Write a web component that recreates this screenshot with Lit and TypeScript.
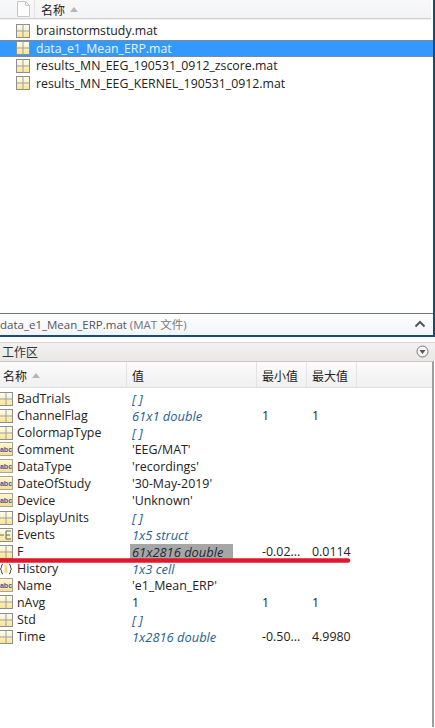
import { LitElement, html, css, svg } from "lit";
import { customElement } from "lit/decorators.js";

type Kind = "grid" | "abc" | "struct" | "cell";
interface Row { name: string; kind: Kind; value: string; blue?: boolean; min?: string; max?: string; hl?: boolean; }

const rows: Row[] = [
  { name: "BadTrials", kind: "grid", value: "[ ]", blue: true },
  { name: "ChannelFlag", kind: "grid", value: "61x1 double", blue: true, min: "1", max: "1" },
  { name: "ColormapType", kind: "grid", value: "[ ]", blue: true },
  { name: "Comment", kind: "abc", value: "'EEG/MAT'" },
  { name: "DataType", kind: "abc", value: "'recordings'" },
  { name: "DateOfStudy", kind: "abc", value: "'30-May-2019'" },
  { name: "Device", kind: "abc", value: "'Unknown'" },
  { name: "DisplayUnits", kind: "grid", value: "[ ]", blue: true },
  { name: "Events", kind: "struct", value: "1x5 struct", blue: true },
  { name: "F", kind: "grid", value: "61x2816 double", blue: true, min: "-0.02...", max: "0.0114", hl: true },
  { name: "History", kind: "cell", value: "1x3 cell", blue: true },
  { name: "Name", kind: "abc", value: "'e1_Mean_ERP'" },
  { name: "nAvg", kind: "grid", value: "1", min: "1", max: "1" },
  { name: "Std", kind: "grid", value: "[ ]", blue: true },
  { name: "Time", kind: "grid", value: "1x2816 double", blue: true, min: "-0.50...", max: "4.9980" },
];

const files = ["brainstormstudy.mat", "data_e1_Mean_ERP.mat", "results_MN_EEG_190531_0912_zscore.mat", "results_MN_EEG_KERNEL_190531_0912.mat"];

const gridIcon = (id: string) => html`<svg width="14" height="14" viewBox="0 0 14 14">
  <defs><linearGradient id=${id} x1="0" y1="0" x2="0" y2="1"><stop offset="0" stop-color="#fffdf0"/><stop offset="1" stop-color="#fbe38e"/></linearGradient></defs>
  <rect x=".5" y=".5" width="13" height="13" fill="url(#${id})" stroke="#8b8f93"/>
  <path d="M7 .5V13.5M.5 7H13.5" stroke="#9aa0a4" fill="none"/>
</svg>`;

const abcIcon = (id: string) => html`<svg width="14" height="14" viewBox="0 0 14 14">
  <defs><linearGradient id=${id} x1="0" y1="0" x2="0" y2="1"><stop offset="0" stop-color="#fff8d8"/><stop offset="1" stop-color="#f5dc90"/></linearGradient></defs>
  <rect x=".5" y=".5" width="13" height="13" fill="url(#${id})" stroke="#a8a592"/>
  ${svg`<text x="7" y="10" text-anchor="middle" font-family="Liberation Sans" font-size="7" font-weight="700" fill="#2f5f9e">abc</text>`}
</svg>`;

const structIcon = (id: string) => html`<svg width="14" height="14" viewBox="0 0 14 14">
  <defs><linearGradient id=${id} x1="0" y1="0" x2="0" y2="1"><stop offset="0" stop-color="#fffdf0"/><stop offset="1" stop-color="#fbe38e"/></linearGradient></defs>
  <rect x=".5" y=".5" width="13" height="13" fill="url(#${id})" stroke="#8b8f93"/>
  <path d="M.5 7H5M12 3H7V11H12M7 7H11" stroke="#55705a" stroke-width="1" fill="none"/>
</svg>`;

const cellIcon = () => html`<svg width="14" height="14" viewBox="0 0 14 14">
  <path d="M4 2C2 2 3 6 1.500 7C3 8 2 12 4 12M10 2C12 2 11 6 12.500 7C11 8 12 12 10 12" stroke="#3c3c3c" fill="none"/>
  <rect x="5.500" y="3" width="3" height="8" fill="#f5dc80"/>
</svg>`;

@customElement("app-root")
export class AppRoot extends LitElement {
  static styles = css`
    :host { display: block; position: relative; width: 435px; height: 728px; overflow: hidden; background: #fff; color: #222; font-family: "Open Sans", "Noto Sans CJK SC", sans-serif; font-size: 12.400px; }
    .files { height: 337px; box-sizing: border-box; border-right: 2px solid #1c4a78; border-bottom: 2px solid #1c4a78; display: flex; flex-direction: column; }
    .fhead { height: 18px; flex: none; display: flex; align-items: center; background: linear-gradient(#f8f8f9, #f2f3f4); border-bottom: 1px solid #d2d2d2; box-shadow: 0 1px 0 #efefef; margin-right: 2px; }
    .docslot { width: 35px; height: 18px; box-sizing: border-box; border-right: 1px solid #e2e2e2; display: flex; align-items: center; justify-content: center; padding-left: 13px; }
    .hname { padding-left: 6px; display: flex; align-items: center; gap: 5px; font-family: "Noto Sans CJK SC", sans-serif; font-size: 12px; }
    .sort { width: 0; height: 0; border-left: 4px solid transparent; border-right: 4px solid transparent; border-bottom: 5px solid #b3b6ba; }
    .flist { flex: 1; padding-top: 3px; font-size: 12.300px; }
    .frow { height: 17.500px; display: flex; align-items: center; gap: 6px; padding-left: 16px; box-sizing: border-box; white-space: nowrap; }
    .frow.sel { background: #3399ff; color: #e8f3ff; border-top: 1px solid #7d8a99; border-bottom: 1px solid #7d8a99; }
    .fstatus { height: 22px; flex: none; box-sizing: border-box; border-top: 1px solid #6b7480; background: linear-gradient(#fff, #f1f4f8); display: flex; align-items: center; justify-content: space-between; padding: 0 7px 1px 0; white-space: nowrap; font-size: 11.500px; color: #777; }
    .fstatus b { font-weight: 400; color: #555; }
    .work { margin-top: 5px; }
    .wtitle { height: 19px; box-sizing: border-box; background: linear-gradient(#f2f1ef, #e9e8e5); border-top: 1px solid #d8d5d0; display: flex; align-items: center; justify-content: space-between; padding: 0 6px 2px 2px; font-family: "Noto Sans CJK SC", sans-serif; font-size: 12px; color: #333; }
    .wtable { border-right: 2px solid #9d9d9d; border-top: 1px solid #c9c9c9; height: 366px; box-sizing: border-box; margin-right: 1px; }
    .thead, .trow { display: grid; grid-template-columns: 127px 130px 50px 50px 1fr; }
    .thead { height: 25px; background: linear-gradient(#fbfbfb, #f0f0f0); border-bottom: 1px solid #dedede; font-family: "Noto Sans CJK SC", sans-serif; font-size: 12px; margin-bottom: 1.500px; }
    .thead > div { display: flex; align-items: center; gap: 5px; padding: 1px 0 0 5px; border-right: 1px solid #e3e3e3; box-sizing: border-box; }
    .thead > div:first-child { padding-left: 3px; }
    .thead > div:last-child { border-right: 0; }
    .trow { height: 17px; align-items: center; white-space: nowrap; }
    .cname { display: flex; align-items: center; gap: 4px; overflow: hidden; }
    .cname svg { margin-left: -1px; flex: none; }
    .cval { padding-left: 5px; }
    .blue { color: #1f5f96; font-style: italic; font-size: 12.900px; }
    .cval span { display: inline-block; line-height: 16px; }
    .hl { background: #a6a6a6; color: #1e2a35; width: 103px; margin-left: -2px; padding-left: 2px; box-sizing: border-box; }
    .cnum { padding-left: 5px; }
    .redline { position: absolute; left: 0; top: 555px; display: block; }
  `;

  render() {
    return html`
      <div class="files">
        <div class="fhead">
          <div class="docslot"><svg width="13" height="16" viewBox="0 0 13 16"><path d="M.5 .5H8.500L12.500 4.500V15.500H.5Z M8.500 .5V4.500H12.500" fill="#fdfdfd" stroke="#c4c6c9"/></svg></div>
          <div class="hname">名称<span class="sort"></span></div>
        </div>
        <div class="flist">
          ${files.map((f, i) => html`<div class="frow ${i === 1 ? "sel" : ""}">${gridIcon("f" + i)}<span>${f}</span></div>`)}
        </div>
        <div class="fstatus">
          <span><b>data_e1_Mean_ERP.mat</b> (MAT 文件)</span>
          <svg width="12" height="8" viewBox="0 0 12 8"><path d="M1.500 6.500L6 2L10.500 6.500" stroke="#555" stroke-width="2" fill="none"/></svg>
        </div>
      </div>
      <div class="work">
        <div class="wtitle">
          <span>工作区</span>
          <svg width="13" height="13" viewBox="0 0 13 13"><circle cx="6.500" cy="6.500" r="5.500" fill="#f4f4f4" stroke="#777"/><path d="M3.500 5H9.500L6.500 9Z" fill="#555"/></svg>
        </div>
        <div class="wtable">
          <div class="thead">
            <div>名称<span class="sort"></span></div><div>值</div><div>最小值</div><div>最大值</div><div></div>
          </div>
          ${rows.map((r, i) => html`<div class="trow">
            <div class="cname">${r.kind === "grid" ? gridIcon("g" + i) : r.kind === "abc" ? abcIcon("g" + i) : r.kind === "struct" ? structIcon("g" + i) : cellIcon()}<span>${r.name}</span></div>
            <div class="cval ${r.blue ? "blue" : ""}"><span class="${r.hl ? "hl" : ""}">${r.value}</span></div>
            <div class="cnum">${r.min ?? ""}</div>
            <div class="cnum">${r.max ?? ""}</div>
            <div></div>
          </div>`)}
        </div>
      </div>
      <svg class="redline" width="352" height="10" viewBox="0 0 352 10"><path d="M0 5.500H348" stroke="#e0182d" stroke-width="4.500" stroke-linecap="round"/></svg>
    `;
  }
}
